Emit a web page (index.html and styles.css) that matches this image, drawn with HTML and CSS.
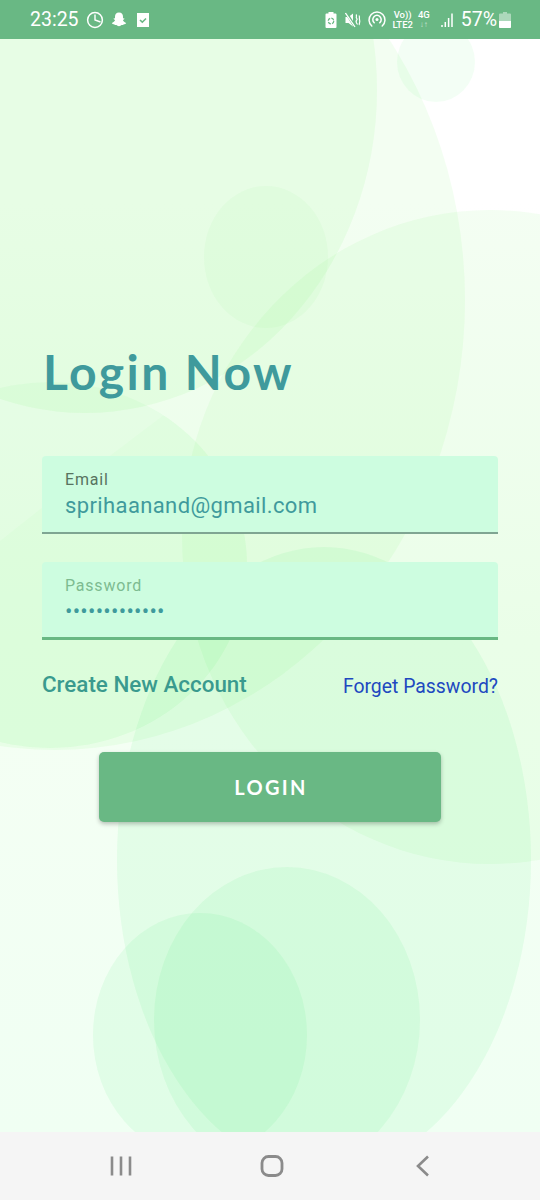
FILE: index.html
```html
<!DOCTYPE html>
<html lang="en">
<head>
<meta charset="utf-8">
<title>Login Now</title>
<link rel="stylesheet" href="styles.css">
</head>
<body>
<div class="phone">
  <header class="status">
    <div class="status-group">
      <span class="time">23:25</span>
      <svg class="clock" width="18" height="18" viewBox="0 0 18 18"><circle cx="9" cy="9" r="7.400" fill="none" stroke="#fff" stroke-width="1.500"/><path d="M9 3.500V9l5.500 2" fill="none" stroke="#fff" stroke-width="1.400"/></svg>
      <svg class="snap" width="18" height="18" viewBox="0 0 18 18"><path d="M9 1.500c2.800 0 4 2 4 4.200v1.500l1.500.4c-.1.9-1 1.200-1.600 1.500.5 1.400 1.700 2.400 3.300 2.800-.2 1-1.500 1.100-2.400 1.300-.4 1-1.200.6-2.100.8-.8.2-1.400 1.300-2.700 1.300s-1.900-1.100-2.700-1.300c-.9-.2-1.700.2-2.100-.8-.9-.2-2.200-.3-2.400-1.300 1.600-.4 2.800-1.400 3.300-2.800-.6-.3-1.500-.6-1.600-1.500l1.500-.4V5.700C5 3.500 6.200 1.500 9 1.500z" fill="#fff"/></svg>
      <svg class="check" width="14" height="16" viewBox="0 0 14 16"><path d="M1 1h12v14H1z" fill="#fff"/><path d="M4 8l2.300 2.200L10 6.500" fill="none" stroke="#69b884" stroke-width="1.600"/></svg>
    </div>
    <div class="status-group status-right">
      <svg width="12" height="16" viewBox="0 0 12 16"><path d="M3.500 0h5v1.500H10.500a1 1 0 0 1 1 1V15a1 1 0 0 1-1 1h-9a1 1 0 0 1-1-1V2.500a1 1 0 0 1 1-1h2z" fill="#fff"/><circle cx="6" cy="9" r="2.800" fill="none" stroke="#69b884" stroke-width="1.200" stroke-dasharray="3.200 1.200"/></svg>
      <svg class="s-mute" width="16" height="16" viewBox="0 0 16 16"><path d="M0.500 5h3L8 1.500v13L3.500 11h-3z" fill="#fff"/><path d="M1 .5l9.500 15" stroke="#69b884" stroke-width="2.800"/><path d="M.5 1l9.500 14" stroke="#fff" stroke-width="1.300"/><path d="M11 2.500c1.500 1.500-.5 2.500.5 3.500s1 1.500 0 2.500-.5 2 1 4M14 3.500c1 1.500 0 2.500.5 4s.5 2 0 3.500-.5 1.500 0 2" fill="none" stroke="#fff" stroke-width="1.200"/></svg>
      <svg class="s-wifi" width="18" height="17" viewBox="0 0 18 17"><path d="M3.800 15a8 8 0 1 1 10.400 0M6.200 11.700a4.200 4.200 0 1 1 5.600 0" fill="none" stroke="#fff" stroke-width="1.500" stroke-linecap="round"/><circle cx="9" cy="8.500" r="1.500" fill="#fff"/></svg>
      <span class="net s-lte"><span>Vo))</span><span>LTE2</span></span>
      <span class="net s-4g"><span>4G</span><span class="arrows">↓↑</span></span>
      <svg class="s-sig" width="12" height="16" viewBox="0 0 12 16"><path d="M1 13v2M4.300 10v5M7.600 6v9M11 1.500V15" stroke="#fff" stroke-width="1.500" fill="none"/></svg>
      <span class="pct">57%</span>
      <svg class="s-bat" width="12" height="16" viewBox="0 0 12 16"><path d="M4 0h4v1.500h3a1 1 0 0 1 1 1V15a1 1 0 0 1-1 1H1a1 1 0 0 1-1-1V2.500a1 1 0 0 1 1-1h3z" fill="#fff" fill-opacity=".45"/><path d="M0 9h12v6a1 1 0 0 1-1 1H1a1 1 0 0 1-1-1z" fill="#fff"/></svg>
    </div>
  </header>

  <main class="screen">
    <svg class="blobs" width="540" height="1093" viewBox="0 39 540 1093" aria-hidden="true">
      <defs><clipPath id="circle-clip"><ellipse cx="50" cy="565" rx="197" ry="183"/></clipPath></defs>
      <ellipse class="up-a" cx="55" cy="300" rx="410" ry="450"/>
      <ellipse class="up-b" cx="85" cy="90" rx="292" ry="323"/>
      <ellipse class="up-e" cx="436" cy="62" rx="39" ry="40"/>
      <ellipse class="up-f" cx="266" cy="257" rx="62" ry="71"/>
      <ellipse class="up-c" cx="490" cy="537" rx="308" ry="327"/>
      <ellipse class="up-g" cx="50" cy="565" rx="197" ry="183"/>
      <path class="up-d" d="M0 541 L53 499 L177 405 L260 380 V760 H0 Z" clip-path="url(#circle-clip)"/>
      <ellipse class="low-a" cx="324" cy="860" rx="207" ry="313"/>
      <ellipse class="low-a" cx="287" cy="1020" rx="133" ry="153"/>
      <ellipse class="low-a" cx="200" cy="1035" rx="107" ry="122"/>
    </svg>
    <div class="content">
      <h1 class="title">Login Now</h1>
      <div class="field field-email">
        <span class="label">Email</span>
        <span class="value">sprihaanand@gmail.com</span>
      </div>
      <div class="field field-pass">
        <span class="label label-pass">Password</span>
        <span class="value dots">•••••••••••••</span>
      </div>
      <div class="links">
        <a class="create">Create New Account</a>
        <a class="forget">Forget Password?</a>
      </div>
      <button class="login" type="button">LOGIN</button>
    </div>
  </main>

  <nav class="navbar">
    <svg width="24" height="24" viewBox="0 0 24 24"><path d="M3 2.500v19M12 2.500v19M21 2.500v19" stroke="#8b8b8b" stroke-width="2.600" fill="none"/></svg>
    <svg width="24" height="24" viewBox="0 0 24 24"><rect x="2" y="2.500" width="20" height="19" rx="6.500" fill="none" stroke="#8b8b8b" stroke-width="2.800"/></svg>
    <svg width="24" height="24" viewBox="0 0 24 24"><path d="M17 2.500L7 12l10 9.500" fill="none" stroke="#8b8b8b" stroke-width="2.600"/></svg>
  </nav>
</div>
</body>
</html>
```
FILE: styles.css
```css
* { box-sizing: border-box; }
html, body { margin: 0; padding: 0; }
body { font-family: Roboto, "Liberation Sans", sans-serif; background: #fff; }
.phone { width: 540px; height: 1200px; display: flex; flex-direction: column; overflow: hidden; }

.status { height: 39px; flex: none; background: #69b884; color: #fff; display: flex; justify-content: space-between; align-items: center; padding: 0 29px 0 30px; }
.status-group { display: flex; align-items: center; }
.time { font-size: 19.500px; }
.clock { margin-left: 7px; }
.snap { margin-left: 6px; }
.check { margin-left: 8px; }
.s-mute { margin-left: 8px; }
.s-wifi { margin-left: 7px; }
.s-lte { margin-left: 6px; }
.s-4g { margin-left: 5px; }
.s-sig { margin-left: 11px; }
.pct { font-size: 19.500px; margin-left: 8px; }
.s-bat { margin-left: 2px; }
.net { display: flex; flex-direction: column; align-items: center; font-size: 9.500px; line-height: 9.500px; font-weight: 500; }
.arrows { font-size: 8px; opacity: .6; }

.screen { position: relative; flex: 1; background: linear-gradient(#fff 0%, #fff 15%, #f5fff4 55%, #f0fff3 100%); overflow: hidden; }
.blobs { position: absolute; left: 0; top: 0; }
.up-a { fill: rgba(100, 240, 90, .08); }
.up-b { fill: rgba(100, 240, 90, .085); }
.up-c { fill: rgba(100, 240, 90, .07); }
.up-d { fill: rgba(100, 240, 90, .03); }
.up-e { fill: rgba(80, 240, 110, .07); }
.up-f { fill: rgba(100, 240, 90, .05); }
.up-g { fill: rgba(90, 240, 110, .06); }
.low-a { fill: rgba(60, 235, 110, .085); }

.content { position: relative; padding: 0 42px; display: flex; flex-direction: column; }
.title { margin: 303px 0 0 1px; height: 60px; line-height: 60px; font-family: Lato, sans-serif; font-weight: 700; font-size: 48px; color: #3f9a9c; letter-spacing: 2.400px; white-space: nowrap; }
.field { height: 78px; background: #cdfde0; border-radius: 4px 4px 0 0; padding: 14px 23px 0; display: flex; flex-direction: column; }
.field-email { margin-top: 54px; border-bottom: 2px solid #7fa592; }
.field-pass { margin-top: 28px; border-bottom: 3px solid #69b884; }
.label { font-size: 16px; line-height: 20px; letter-spacing: .8px; color: #57735f; }
.label-pass { color: #7dbb90; }
.value { font-size: 22px; line-height: 32px; letter-spacing: .38px; color: #3f9a9c; }
.dots { margin-top: 2px; font-size: 22px; line-height: 28px; letter-spacing: .25px; }

.links { display: flex; justify-content: space-between; align-items: center; margin-top: 30px; height: 30px; }
.create { font-size: 22.400px; font-weight: 500; color: #3a9a8e; margin-bottom: 2px; }
.forget { font-size: 19.400px; color: #2048c0; margin-top: 2px; }

.login { align-self: center; width: 342px; height: 70px; margin-top: 52px; border: 0; border-radius: 5px; background: #69b884; color: #fff; font-family: Lato, sans-serif; font-weight: 700; font-size: 20px; letter-spacing: 2.300px; padding-left: 8px; box-shadow: 0 2px 4px rgba(0, 0, 0, .25); }

.navbar { height: 68px; flex: none; background: #f5f5f5; display: flex; justify-content: space-between; align-items: center; padding: 0 105px 0 109px; }
```
